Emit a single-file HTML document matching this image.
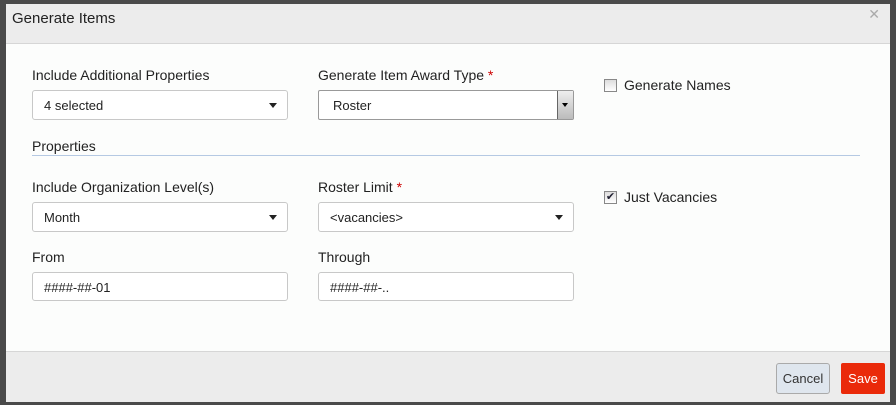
<!DOCTYPE html>
<html><head><style>
body{margin:0;width:896px;height:405px;background:#4a4a4a;font-family:"Liberation Sans",sans-serif;position:relative;overflow:hidden}
#d{position:absolute;left:6px;top:4px;width:884px;height:397px;background:#fcfdfc}
#h{position:absolute;left:0;top:0;width:884px;height:39px;background:#ececec;border-bottom:1px solid #d6d6d6}
#h span{position:absolute;left:6px;top:6px;font-size:15px;color:#222}
#x{position:absolute;right:10px;top:2px;color:#aaa;font-size:14px}
#f{position:absolute;left:0;top:347px;width:884px;height:50px;background:#ececec;border-top:1px solid #d6d6d6}
.l{position:absolute;font-size:14px;color:#222}
.s{position:absolute;height:28px;border:1px solid #c8c8c8;border-radius:3px;background:#fff;font-size:13px;color:#222;box-sizing:border-box;padding:7px 11px}
.a{position:absolute;right:10px;top:12px;border-left:4px solid transparent;border-right:4px solid transparent;border-top:5px solid #222}
.r{color:#c00}
.cb{position:absolute;width:11px;height:11px;border:1px solid #888;background:linear-gradient(#ddd,#fff)}
</style></head><body>
<div id="d">
<div id="h"><span>Generate Items</span><div id="x">✕</div></div>
<div class="l" style="left:26px;top:63px">Include Additional Properties</div>
<div class="s" style="left:26px;top:86px;width:256px;height:30px">4 selected<div class="a"></div></div>
<div class="l" style="left:312px;top:63px">Generate Item Award Type <span class="r">*</span></div>
<div class="s" style="left:312px;top:86px;width:256px;height:30px;padding-left:14px;border-color:#999;border-radius:2px">Roster<div style="position:absolute;right:0;top:0;width:15px;height:28px;background:linear-gradient(#eee,#bbb);border-left:1px solid #666"><div style="margin:12px 0 0 4px;border-left:3px solid transparent;border-right:3px solid transparent;border-top:4px solid #000;width:0"></div></div></div>
<div class="cb" style="left:598px;top:75px"></div>
<div class="l" style="left:618px;top:73px">Generate Names</div>
<div class="l" style="left:26px;top:134px">Properties</div>
<div style="position:absolute;left:26px;top:151px;width:828px;height:1px;background:#b5c9e3"></div>
<div class="l" style="left:26px;top:175px">Include Organization Level(s)</div>
<div class="s" style="left:26px;top:198px;width:256px;height:30px">Month<div class="a"></div></div>
<div class="l" style="left:312px;top:175px">Roster Limit <span class="r">*</span></div>
<div class="s" style="left:312px;top:198px;width:256px;height:30px">&lt;vacancies&gt;<div class="a"></div></div>
<div class="cb" style="left:598px;top:187px;font-size:11px;line-height:11px;color:#223;text-align:center">✔</div>
<div class="l" style="left:618px;top:185px">Just Vacancies</div>
<div class="l" style="left:26px;top:245px">From</div>
<div class="s" style="left:26px;top:268px;width:256px;height:29px">####-##-01</div>
<div class="l" style="left:312px;top:245px">Through</div>
<div class="s" style="left:312px;top:268px;width:256px;height:29px">####-##-..</div>
<div id="f">
<div style="position:absolute;left:770px;top:11px;width:54px;height:31px;box-sizing:border-box;border:1px solid #aaa;border-radius:3px;background:#dfe6ee;font-size:13px;color:#333;text-align:center;line-height:29px">Cancel</div>
<div style="position:absolute;left:835px;top:11px;width:44px;height:31px;border-radius:2px;background:#ea2a0a;font-size:13px;color:#fff;text-align:center;line-height:31px">Save</div>
</div>
</div>
</body></html>
